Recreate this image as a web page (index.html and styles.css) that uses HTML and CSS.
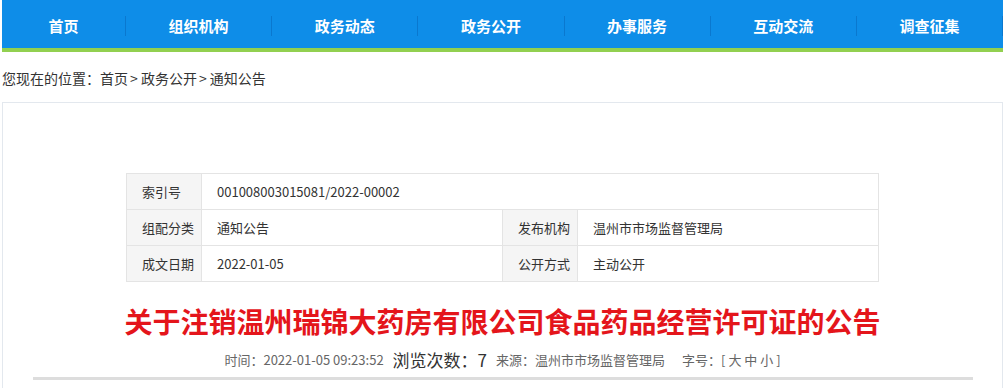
FILE: index.html
```html
<!DOCTYPE html>
<html lang="zh-CN">

<head>
    <meta charset="UTF-8">
    <title>关于注销温州瑞锦大药房有限公司食品药品经营许可证的公告</title>
    <link rel="stylesheet" href="styles.css">
</head>

<body>
    <div class="page">
        <ul class="nav">
            <li class="nav-item nav-first"><a href="#">首页</a></li>
            <li class="nav-item"><a href="#">组织机构</a></li>
            <li class="nav-item"><a href="#">政务动态</a></li>
            <li class="nav-item"><a href="#">政务公开</a></li>
            <li class="nav-item"><a href="#">办事服务</a></li>
            <li class="nav-item"><a href="#">互动交流</a></li>
            <li class="nav-item"><a href="#">调查征集</a></li>
        </ul>

        <div class="crumb">您现在的位置：<a href="#">首页</a>&gt; <a href="#">政务公开</a>&gt; <a href="#">通知公告</a></div>

        <div class="content">
            <table class="info">
                <colgroup>
                    <col class="col-label">
                    <col class="col-value">
                    <col class="col-label">
                    <col class="col-value">
                </colgroup>
                <tr>
                    <td class="label">索引号</td>
                    <td colspan="3">001008003015081/2022-00002</td>
                </tr>
                <tr>
                    <td class="label">组配分类</td>
                    <td>通知公告</td>
                    <td class="label">发布机构</td>
                    <td>温州市市场监督管理局</td>
                </tr>
                <tr>
                    <td class="label">成文日期</td>
                    <td>2022-01-05</td>
                    <td class="label">公开方式</td>
                    <td>主动公开</td>
                </tr>
            </table>

            <h1 class="title">关于注销温州瑞锦大药房有限公司食品药品经营许可证的公告</h1>

            <div class="meta">
                <span>时间：2022-01-05 09:23:52</span>
                <span class="views">浏览次数：7</span>
                <span>来源：温州市市场监督管理局</span>
                <span class="size">字号：[ <a href="#">大</a> <a href="#">中</a> <a href="#">小</a> ]</span>
            </div>
            <div class="rule"></div>
        </div>
    </div>
</body>

</html>
```

FILE: styles.css
```css
* {
    margin: 0;
    padding: 0;
    box-sizing: border-box;
}

body {
    background: #fff;
    font-family: "Noto Sans CJK SC", "Liberation Sans", sans-serif;
    color: #333;
    overflow: hidden;
}

a {
    color: inherit;
    text-decoration: none;
}

.page {
    width: 1001px;
    margin-left: 2px;
}

/* 导航 */
.nav {
    list-style: none;
    display: flex;
    height: 52px;
    background: #0e8de8;
    border-bottom: 4px solid #92d050;
}

.nav-item {
    flex: 1;
    display: flex;
    align-items: center;
    padding-top: 4px;
}

.nav-first {
    flex: none;
    width: 124px;
}

.nav-item a {
    display: block;
    width: 100%;
    height: 20px;
    line-height: 20px;
    text-align: center;
    color: #fff;
    font-size: 15px;
    font-weight: bold;
    border-right: 1px solid #0a78cf;
}

/* 当前位置 */
.crumb {
    height: 50px;
    line-height: 52px;
    font-size: 14px;
    color: #333;
}

.crumb a {
    margin-right: 2px;
}

/* 正文 */
.content {
    border: 1px solid #e3e8ee;
    height: 300px;
    padding-top: 70px;
}

.info {
    width: 752px;
    margin: 0 auto;
    border-collapse: collapse;
    table-layout: fixed;
    font-size: 13px;
    color: #333;
}

.col-label {
    width: 75px;
}

.col-value {
    width: 301px;
}

.info td {
    height: 36px;
    border: 1px solid #e4e4e4;
    padding: 0 15px;
    white-space: nowrap;
}

.info .label {
    background: #f5f5f5;
}

.title {
    margin-top: 19px;
    line-height: 40px;
    text-align: center;
    font-size: 28px;
    font-weight: bold;
    color: #e4151b;
}

.meta {
    display: flex;
    justify-content: center;
    align-items: center;
    gap: 9px;
    height: 36px;
    font-size: 13px;
    color: #666;
}

.meta .views {
    font-size: 17px;
    color: #333;
}

.meta .size {
    margin-left: 8px;
}

.rule {
    width: 940px;
    height: 3px;
    margin: 0 auto;
    background: #ddd;
}
```
